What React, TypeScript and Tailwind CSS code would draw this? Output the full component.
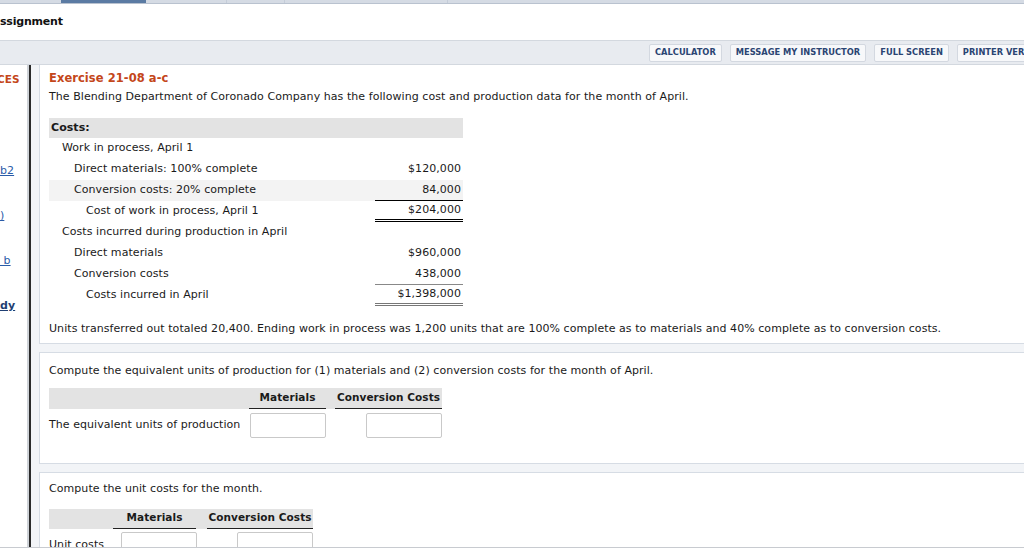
import React from "react";

const font = { fontFamily: '"DejaVu Sans", Verdana, sans-serif' };

type Row = {
  label: string;
  indent: string;
  amount?: string;
  shade?: boolean;
  cell?: string;
};

const rows: Row[] = [
  { label: "Work in process, April 1", indent: "pl-[13px]" },
  { label: "Direct materials: 100% complete", indent: "pl-[25px]", amount: "$120,000" },
  {
    label: "Conversion costs: 20% complete",
    indent: "pl-[25px]",
    amount: "84,000",
    shade: true,
    cell: "border-b border-black",
  },
  {
    label: "Cost of work in process, April 1",
    indent: "pl-[37px]",
    amount: "$204,000",
    cell: "border-b-[3px] border-double border-black",
  },
  { label: "Costs incurred during production in April", indent: "pl-[13px]" },
  { label: "Direct materials", indent: "pl-[25px]", amount: "$960,000" },
  {
    label: "Conversion costs",
    indent: "pl-[25px]",
    amount: "438,000",
    cell: "border-b border-[#888]",
  },
  {
    label: "Costs incurred in April",
    indent: "pl-[37px]",
    amount: "$1,398,000",
    cell: "border-b-[3px] border-double border-[#777]",
  },
];

function ToolButton({ children }: { children: React.ReactNode }) {
  return (
    <button className="h-[18px] shrink-0 rounded-[2px] border border-[#d3d8e0] bg-[#f7f8fa] px-[5px] text-[8.3px] font-bold leading-none text-[#2b4573]">
      {children}
    </button>
  );
}

function Input({ className = "w-[77px]" }: { className?: string }) {
  return (
    <div
      className={
        "h-[25px] shrink-0 rounded-[2px] border border-[#c9c9c9] bg-white " + className
      }
    />
  );
}

function ColHead({ w, children }: { w: string; children: React.ReactNode }) {
  return (
    <div
      className={
        "flex shrink-0 items-end justify-center whitespace-nowrap border-b border-[#222] pb-[2px] text-[10.5px] font-bold " +
        w
      }
    >
      {children}
    </div>
  );
}

export default function App() {
  return (
    <div
      className="flex h-[557px] w-[1024px] flex-col overflow-hidden bg-white text-[11px] tracking-[0.06px] text-[#1a1a1a]"
      style={font}
    >
      {/* top tab strip */}
      <div className="flex h-[4px] border-b border-[#b9c2cf] bg-[#d5dbe4]">
        <div className="w-[61px]" />
        <div className="w-[85px] bg-[#5b7ba3]" />
        <div className="w-[81px] border-r border-[#c4ccd8]" />
        <div className="w-[58px] border-r border-[#c4ccd8]" />
        <div className="w-[163px] border-r border-[#c4ccd8]" />
      </div>

      {/* header */}
      <div className="flex h-[36px] items-center">
        <h1 className="text-[11px] font-bold tracking-[-0.2px] text-[#111]">ssignment</h1>
      </div>

      {/* toolbar */}
      <div className="flex h-[25px] items-center gap-[8px] overflow-hidden whitespace-nowrap border-y border-[#d3d8df] bg-[#e8ebf0] pl-[649px] tracking-normal">
        <ToolButton>CALCULATOR</ToolButton>
        <ToolButton>MESSAGE MY INSTRUCTOR</ToolButton>
        <ToolButton>FULL SCREEN</ToolButton>
        <ToolButton>PRINTER VERSION</ToolButton>
      </div>

      {/* body */}
      <div className="flex min-h-0 flex-1">
        {/* sidebar */}
        <div className="w-[27px] shrink-0 overflow-hidden">
          <div className="flex flex-col items-start">
            <div className="-ml-[3px] pt-[6px] text-[10.5px] font-bold leading-[16px] text-[#c4461a]">
              CES
            </div>
            <a className="mt-[76px] leading-[16px] text-[#2a5ca8] underline">b2</a>
            <a className="mt-[29px] leading-[16px] text-[#2a5ca8] underline">)</a>
            <a className="mt-[29px] leading-[16px] text-[#2a5ca8] underline">&nbsp;b</a>
            <a className="mt-[29px] font-bold leading-[16px] text-[#1f3f73] underline">dy</a>
          </div>
        </div>

        {/* separator */}
        <div className="flex w-[4px] shrink-0">
          <div className="w-[2px] bg-[#cfd3d8]" />
          <div className="w-[2px] bg-[#2a2a2a]" />
        </div>

        {/* content */}
        <div className="flex min-w-0 flex-1 flex-col gap-[8px] bg-[#f2f4f7] pl-[8px]">
          {/* panel 1 */}
          <section className="-mr-[20px] border-b border-l border-r border-[#d6dce4] bg-white pb-[6px] pl-[9px] pt-[5px]">
            <h2 className="text-[11.5px] font-bold leading-[16px] text-[#c4461a]">
              Exercise 21-08 a-c
            </h2>
            <p className="mt-[3px] leading-[16px]">
              The Blending Department of Coronado Company has the following cost and
              production data for the month of April.
            </p>

            <div className="mt-[13px] w-[414px]">
              <div className="flex h-[20px] items-center bg-[#e3e3e3] pl-[2px] font-bold">
                Costs:
              </div>
              {rows.map((r) => (
                <div
                  key={r.label}
                  className={"flex h-[21px] " + (r.shade ? "bg-[#f3f3f3]" : "")}
                >
                  <div className={"flex flex-1 items-center " + r.indent}>{r.label}</div>
                  <div
                    className={
                      "flex w-[88px] items-center justify-end pr-[2px] " + (r.cell ?? "")
                    }
                  >
                    {r.amount}
                  </div>
                </div>
              ))}
            </div>

            <p className="mt-[15px] leading-[16px]">
              Units transferred out totaled 20,400. Ending work in process was 1,200
              units that are 100% complete as to materials and 40% complete as to
              conversion costs.
            </p>
          </section>

          {/* panel 2 */}
          <section className="-mr-[20px] h-[112px] shrink-0 border border-[#d6dce4] bg-white pl-[9px] pt-[10px]">
            <p className="leading-[16px]">
              Compute the equivalent units of production for (1) materials and (2)
              conversion costs for the month of April.
            </p>
            <div className="mt-[9px] w-[393px]">
              <div className="flex h-[21px] bg-[#e3e3e3]">
                <div className="w-[200px] shrink-0" />
                <ColHead w="w-[77px]">Materials</ColHead>
                <div className="w-[9px] shrink-0" />
                <ColHead w="w-[107px]">Conversion Costs</ColHead>
              </div>
              <div className="flex items-center pt-[4px]">
                <div className="w-[201px] shrink-0">The equivalent units of production</div>
                <Input className="w-[76px]" />
                <div className="w-[40px] shrink-0" />
                <Input className="w-[76px]" />
              </div>
            </div>
          </section>

          {/* panel 3 */}
          <section className="-mr-[20px] flex-1 border-x border-t border-[#d6dce4] bg-white pl-[9px] pt-[8px]">
            <p className="leading-[16px]">Compute the unit costs for the month.</p>
            <div className="mt-[12px] w-[264px]">
              <div className="flex h-[20px] bg-[#e3e3e3]">
                <div className="w-[64px] shrink-0" />
                <ColHead w="w-[83px]">Materials</ColHead>
                <div className="w-[11px] shrink-0" />
                <ColHead w="w-[106px]">Conversion Costs</ColHead>
              </div>
              <div className="flex items-start pt-[3px]">
                <div className="w-[72px] shrink-0 pt-[5px]">Unit costs</div>
                <Input className="w-[76px]" />
                <div className="w-[40px] shrink-0" />
                <Input className="w-[76px]" />
              </div>
            </div>
          </section>
        </div>
      </div>

      {/* bottom edge */}
      <div className="h-[10px] shrink-0 border-t border-[#c8cbd0] bg-white" />
    </div>
  );
}
